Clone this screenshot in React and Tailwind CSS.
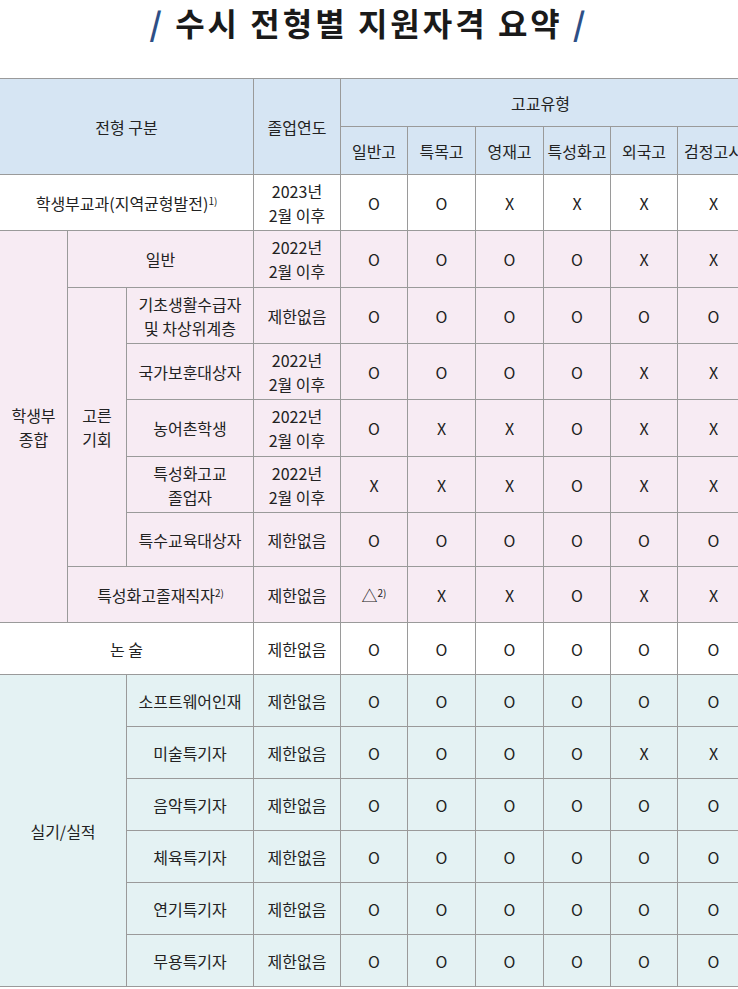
export default function App() {
  const c = "border border-[#9a9a9a] text-center align-middle";
  const H = ["일반고","특목고","영재고","특성화고","외국고","검정고시"];
  const Marks = ({m}) => m.map((v,i)=>(
    <td key={i} className={c}>{v==="T"?<span>△<sup className="text-[10px]">2)</sup></span>:v}</td>
  ));
  const pink="bg-[#f7ebf3]", teal="bg-[#e4f2f3]";
  const yr=(y)=>(<>{y}년<br/>2월 이후</>);
  return (
    <div className="w-[738px] h-[989px] overflow-hidden bg-white text-[#222] text-[16px] leading-[24px]" style={{fontFamily:'"Noto Sans CJK KR","Noto Sans",sans-serif'}}>
      <div className="h-[78px] pt-[0px] text-center">
        <span className="text-[32px] leading-[44px] font-bold tracking-[3px] text-[#1a1a1a] whitespace-nowrap"><span className="text-[#2e4f86]">/</span> 수시 전형별 지원자격 요약 <span className="text-[#2e4f86]">/</span></span>
      </div>
      <table className="table-fixed border-collapse w-[750px] -ml-[1px]">
        <colgroup>
          <col className="w-[68px]"/><col className="w-[59px]"/><col className="w-[127px]"/><col className="w-[87px]"/>
          <col className="w-[67px]"/><col className="w-[68px]"/><col className="w-[68px]"/><col className="w-[67px]"/><col className="w-[67px]"/><col className="w-[72px]"/>
        </colgroup>
        <tbody>
          <tr className="h-[48px] bg-[#d6e5f3]">
            <td colSpan={3} rowSpan={2} className={c}>전형 구분</td>
            <td rowSpan={2} className={c}>졸업연도</td>
            <td colSpan={6} className={c+" text-left pl-[170px]"}>고교유형</td>
          </tr>
          <tr className="h-[48px] bg-[#d6e5f3]">
            {H.map(h=><td key={h} className={c+" whitespace-nowrap overflow-hidden"}>{h}</td>)}
          </tr>
          <tr className="h-[56px]">
            <td colSpan={3} className={c}>학생부교과(지역균형발전)<sup className="text-[10px]">1)</sup></td>
            <td className={c}>{yr(2023)}</td><Marks m={["O","O","X","X","X","X"]}/>
          </tr>
          <tr className={"h-[57px] "+pink}>
            <td rowSpan={7} className={c}>학생부<br/>종합</td>
            <td colSpan={2} className={c}>일반</td>
            <td className={c}>{yr(2022)}</td><Marks m={["O","O","O","O","X","X"]}/>
          </tr>
          <tr className={"h-[56px] "+pink}>
            <td rowSpan={5} className={c}>고른<br/>기회</td>
            <td className={c}>기초생활수급자<br/>및 차상위계층</td>
            <td className={c}>제한없음</td><Marks m={["O","O","O","O","O","O"]}/>
          </tr>
          <tr className={"h-[56px] "+pink}>
            <td className={c}>국가보훈대상자</td>
            <td className={c}>{yr(2022)}</td><Marks m={["O","O","O","O","X","X"]}/>
          </tr>
          <tr className={"h-[57px] "+pink}>
            <td className={c}>농어촌학생</td>
            <td className={c}>{yr(2022)}</td><Marks m={["O","X","X","O","X","X"]}/>
          </tr>
          <tr className={"h-[56px] "+pink}>
            <td className={c}>특성화고교<br/>졸업자</td>
            <td className={c}>{yr(2022)}</td><Marks m={["X","X","X","O","X","X"]}/>
          </tr>
          <tr className={"h-[54px] "+pink}>
            <td className={c}>특수교육대상자</td>
            <td className={c}>제한없음</td><Marks m={["O","O","O","O","O","O"]}/>
          </tr>
          <tr className={"h-[56px] "+pink}>
            <td colSpan={2} className={c}>특성화고졸재직자<sup className="text-[10px]">2)</sup></td>
            <td className={c}>제한없음</td><Marks m={["T","X","X","O","X","X"]}/>
          </tr>
          <tr className="h-[52px]">
            <td colSpan={3} className={c}>논 술</td>
            <td className={c}>제한없음</td><Marks m={["O","O","O","O","O","O"]}/>
          </tr>
          {[["소프트웨어인재",["O","O","O","O","O","O"]],["미술특기자",["O","O","O","O","X","X"]],["음악특기자",["O","O","O","O","O","O"]],["체육특기자",["O","O","O","O","O","O"]],["연기특기자",["O","O","O","O","O","O"]],["무용특기자",["O","O","O","O","O","O"]]].map(([n,m],i)=>(
            <tr key={n} className={"h-[52px] "+teal}>
              {i===0 && <td rowSpan={6} colSpan={2} className={c}>실기/실적</td>}
              <td className={c}>{n}</td>
              <td className={c}>제한없음</td><Marks m={m}/>
            </tr>
          ))}
        </tbody>
      </table>
    </div>
  );
}
